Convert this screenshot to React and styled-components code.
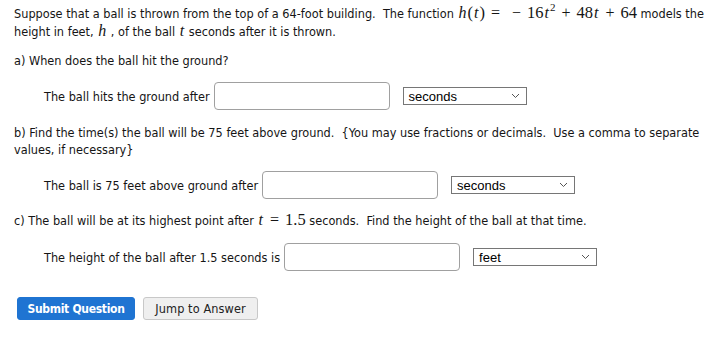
import React from 'react';
import styled, { createGlobalStyle } from 'styled-components';

const GlobalStyle = createGlobalStyle`
    body {
        margin: 0;
        background: #ffffff;
        font-family: "DejaVu Sans Condensed", "DejaVu Sans", Tahoma, sans-serif;
        font-size: 12.6px;
        color: #151515;
    }
`;

const Page = styled.div`
    padding: 5px 14px 0;
    width: 700px;
`;

const Para = styled.p`
    margin: 0 0 ${(p) => p.gap || 0}px;
    line-height: ${(p) => p.lh || 18}px;
    white-space: nowrap;
`;

const Var = styled.span`
    font-family: "Liberation Serif", "DejaVu Serif", serif;
    font-style: italic;
    font-size: 16px;
    line-height: 0;
    padding: 0 1px;
`;

const Num = styled.span`
    font-family: "Liberation Serif", "DejaVu Serif", serif;
    font-size: 16.5px;
    line-height: 0;
`;

const Op = styled.span`
    font-family: "Liberation Serif", "DejaVu Serif", serif;
    font-size: 16px;
    line-height: 0;
    padding: 0 6px;
`;

const Sup = styled.span`
    font-family: "Liberation Serif", "DejaVu Serif", serif;
    font-size: 11px;
    line-height: 0;
    position: relative;
    top: -7px;
`;

const Row = styled.div`
    display: flex;
    align-items: center;
    height: 28px;
    padding-left: 30px;
    margin-bottom: ${(p) => p.gap || 0}px;
`;

const Label = styled.span`
    margin-right: 4px;
`;

const Input = styled.div`
    width: 174px;
    height: 26px;
    border: 1px solid #a0a0a0;
    border-radius: 4px;
    margin-right: 13px;
`;

const Select = styled.div`
    height: 16px;
    width: 111px;
    border: 1px solid #767676;
    display: flex;
    align-items: center;
    justify-content: space-between;
    padding: 0 6px 0 5px;
    font-family: "Liberation Sans", Arial, sans-serif;
    font-size: 13px;
    color: #000;
`;

const Buttons = styled.div`
    display: flex;
    gap: 8px;
    padding-left: 3px;
`;

const Button = styled.div`
    box-sizing: border-box;
    height: 23px;
    width: ${(p) => p.w}px;
    display: flex;
    align-items: center;
    justify-content: center;
    border-radius: 3px;
    font-size: ${(p) => (p.primary ? 12 : 12.6)}px;
    letter-spacing: ${(p) => (p.primary ? '-0.3px' : '0.1px')};
    background: ${(p) => (p.primary ? '#1f74d2' : '#efefef')};
    color: ${(p) => (p.primary ? '#ffffff' : '#222222')};
    font-weight: ${(p) => (p.primary ? 'bold' : 'normal')};
    border: 1px solid ${(p) => (p.primary ? '#1f74d2' : '#c8c8c8')};
`;

const Chevron = () => (
    <svg width="9" height="6" viewBox="0 0 9 6">
        <path d="M1 1 L4.5 4.5 L8 1" fill="none" stroke="#555" strokeWidth="1" />
    </svg>
);

const UnitSelect = ({ value }) => (
    <Select>
        <span>{value}</span>
        <Chevron />
    </Select>
);

const AnswerRow = ({ label, unit, gap }) => (
    <Row gap={gap}>
        <Label>{label}</Label>
        <Input />
        <UnitSelect value={unit} />
    </Row>
);

export default function App() {
    return (
        <Page>
            <GlobalStyle />
            <Para gap={11}>
                Suppose that a ball is thrown from the top of a 64-foot building.&nbsp; The function{' '}
                <Var>h</Var><Num>(</Num><Var>t</Var><Num>)</Num><Op>=</Op><Op>−</Op><Num>16</Num><Var>t</Var>
                <Sup>2</Sup>
                <Op>+</Op><Num>48</Num><Var>t</Var><Op>+</Op><Num>64</Num> models the
                <br />
                height in feet, <Var>h</Var> , of the ball <Var>t</Var> seconds after it is thrown.
            </Para>
            <Para gap={12}>a) When does the ball hit the ground?</Para>
            <AnswerRow label="The ball hits the ground after" unit="seconds" gap={14} />
            <Para lh={17} gap={13}>
                b) Find the time(s) the ball will be 75 feet above ground.&nbsp; {'{'}You may use fractions or decimals.&nbsp; Use a
                comma to separate
                <br />
                values, if necessary{'}'}
            </Para>
            <AnswerRow label="The ball is 75 feet above ground after" unit="seconds" gap={13} />
            <Para gap={13}>
                c) The ball will be at its highest point after <Var>t</Var><Op>=</Op><Num>1.5</Num> seconds.&nbsp; Find the
                height of the ball at that time.
            </Para>
            <AnswerRow label="The height of the ball after 1.5 seconds is" unit="feet" gap={26} />
            <Buttons>
                <Button primary w={118}>Submit Question</Button>
                <Button w={115}>Jump to Answer</Button>
            </Buttons>
        </Page>
    );
}
